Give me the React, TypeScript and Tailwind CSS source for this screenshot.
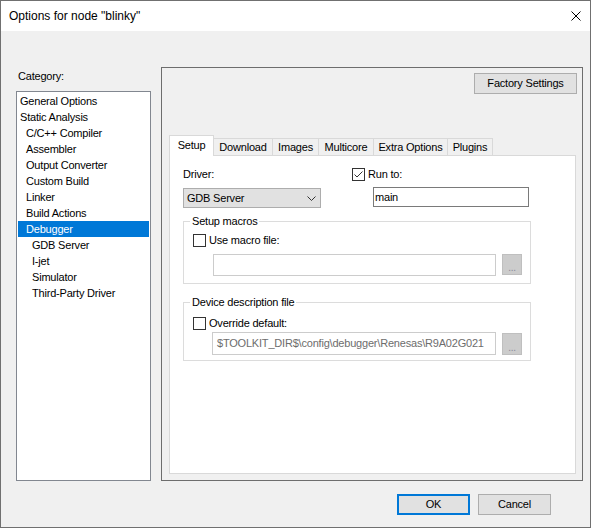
import React from 'react';

type Category = { label: string; level: number; selected?: boolean };

const categories: Category[] = [
  { label: 'General Options', level: 0 },
  { label: 'Static Analysis', level: 0 },
  { label: 'C/C++ Compiler', level: 1 },
  { label: 'Assembler', level: 1 },
  { label: 'Output Converter', level: 1 },
  { label: 'Custom Build', level: 1 },
  { label: 'Linker', level: 1 },
  { label: 'Build Actions', level: 1 },
  { label: 'Debugger', level: 1, selected: true },
  { label: 'GDB Server', level: 2 },
  { label: 'I-jet', level: 2 },
  { label: 'Simulator', level: 2 },
  { label: 'Third-Party Driver', level: 2 },
];

const tabs = [
  { label: 'Setup', width: 'w-[45px]', selected: true },
  { label: 'Download', width: 'w-[60px]' },
  { label: 'Images', width: 'w-[47px]' },
  { label: 'Multicore', width: 'w-[56px]' },
  { label: 'Extra Options', width: 'w-[75px]' },
  { label: 'Plugins', width: 'w-[46px]' },
];

const indent = ['pl-[2px]', 'pl-[8px]', 'pl-[14px]'];

const CheckBox = ({ checked }: { checked?: boolean }) => (
  <span className="flex h-[13px] w-[13px] shrink-0 items-center justify-center border border-[#333333] bg-white">
    {checked && (
      <svg width="11" height="11" viewBox="0 0 11 11">
        <path d="M1.5 5.5 L4 8 L9.5 2.5" fill="none" stroke="#333333" strokeWidth="1" />
      </svg>
    )}
  </span>
);

const BrowseButton = ({ height }: { height: string }) => (
  <div className={`flex w-[20px] ${height} items-end justify-center border border-[#bfbfbf] bg-[#cccccc] pb-[1px] text-[10px] leading-[10px] text-[#8a8a99]`}>
    ...
  </div>
);

export default function App() {
  return (
    <div className="flex h-[528px] w-[591px] flex-col border border-[#707070] bg-[#f0f0f0] font-['Liberation_Sans',Arial,sans-serif] text-[11px] tracking-[-0.2px] text-black">
      {/* Title bar */}
      <div className="flex h-[30px] shrink-0 items-center justify-between bg-white pl-[8px] pr-[9px]">
        <span className="text-[12px] tracking-normal">Options for node "blinky"</span>
        <svg width="10" height="10" viewBox="0 0 10 10">
          <path d="M0.5 0.5 L9.5 9.5 M9.5 0.5 L0.5 9.5" stroke="#000" strokeWidth="1" />
        </svg>
      </div>

      <div className="flex flex-1 flex-col">
        <div className="mt-[36px] flex h-[414px] items-end">
          {/* Category list */}
          <div className="ml-[15px] flex w-[135px] flex-col">
            <div className="pl-[2px] leading-[13px]">Category:</div>
            <div className="mt-[8px] h-[390px] border border-[#828790] bg-white p-px">
              {categories.map((c) => (
                <div
                  key={c.label}
                  className={`h-[16px] leading-[16px] whitespace-nowrap ${indent[c.level]} ${c.selected ? 'bg-[#0078d7] text-white' : ''}`}
                >
                  {c.label}
                </div>
              ))}
            </div>
          </div>

          {/* Options panel */}
          <div className="ml-[10px] flex h-[414px] w-[422px] flex-col border border-[#6d6d6d]">
            <div className="flex justify-end pr-[5px] pt-[5px]">
              <div className="flex h-[21px] w-[103px] items-center justify-center border border-[#adadad] bg-[#e1e1e1]">
                Factory Settings
              </div>
            </div>

            <div className="ml-[7px] mt-[41px] w-[407px]">
              {/* Tabs */}
              <div className="flex h-[20px] items-end">
                {tabs.map((t, i) => (
                  <div
                    key={t.label}
                    className={`flex items-center justify-center border border-b-0 border-[#d9d9d9] ${t.width} ${i > 0 ? '-ml-px' : ''} ${
                      t.selected ? 'relative z-10 -mb-px h-[21px] bg-white pb-[1px]' : 'h-[17px] bg-[#f0f0f0]'
                    }`}
                  >
                    {t.label}
                  </div>
                ))}
              </div>

              {/* Tab page */}
              <div className="h-[319px] border border-[#d9d9d9] bg-white pt-[12px]">
                <div className="flex">
                  <div className="ml-[13px] flex w-[138px] flex-col">
                    <div className="leading-[13px]">Driver:</div>
                    <div className="mt-[7px] flex h-[20px] items-center justify-between border border-[#adadad] bg-[#e1e1e1] pl-[3px] pr-[4px]">
                      <span>GDB Server</span>
                      <svg width="9" height="5" viewBox="0 0 9 5">
                        <path d="M0.5 0.5 L4.5 4.5 L8.5 0.5" fill="none" stroke="#333333" strokeWidth="1" />
                      </svg>
                    </div>
                  </div>
                  <div className="ml-[31px] flex flex-col">
                    <div className="flex h-[13px] items-center gap-[3px] leading-[13px]">
                      <CheckBox checked />
                      <span>Run to:</span>
                    </div>
                    <div className="ml-[21px] mt-[6px] flex h-[20px] w-[156px] items-center border border-[#7a7a7a] bg-white pl-[1px]">
                      main
                    </div>
                  </div>
                </div>

                <fieldset className="ml-[13px] mt-[7px] w-[348px] border border-[#dcdcdc] pb-[7px]">
                  <legend className="ml-[6px] px-[2px] leading-[13px]">Setup macros</legend>
                  <div className="ml-[9px] mt-[6px] flex h-[13px] items-center gap-[3px] leading-[13px]">
                    <CheckBox />
                    <span>Use macro file:</span>
                  </div>
                  <div className="ml-[29px] mt-[7px] flex items-start gap-[6px]">
                    <div className="h-[22px] w-[283px] border border-[#cccccc] bg-white" />
                    <BrowseButton height="h-[21px]" />
                  </div>
                </fieldset>

                <fieldset className="ml-[13px] mt-[12px] w-[348px] border border-[#dcdcdc] pb-[5px]">
                  <legend className="ml-[6px] px-[2px] leading-[13px]">Device description file</legend>
                  <div className="ml-[9px] mt-[8px] flex h-[13px] items-center gap-[3px] leading-[13px]">
                    <CheckBox />
                    <span>Override default:</span>
                  </div>
                  <div className="ml-[28px] mt-[2px] flex items-end gap-[6px]">
                    <div className="flex h-[23px] w-[284px] items-center overflow-hidden whitespace-nowrap border border-[#cccccc] bg-white pl-[4px] text-[#6d6d6d]">
                      $TOOLKIT_DIR$\config\debugger\Renesas\R9A02G021
                    </div>
                    <BrowseButton height="h-[22px]" />
                  </div>
                </fieldset>
              </div>
            </div>
          </div>
        </div>

        {/* Dialog buttons */}
        <div className="mt-[13px] flex justify-end gap-[8px] pr-[39px]">
          <div className="flex h-[21px] w-[73px] items-center justify-center border-2 border-[#0078d7] bg-[#e1e1e1]">OK</div>
          <div className="flex h-[21px] w-[73px] items-center justify-center border border-[#adadad] bg-[#e1e1e1]">Cancel</div>
        </div>
      </div>
    </div>
  );
}
